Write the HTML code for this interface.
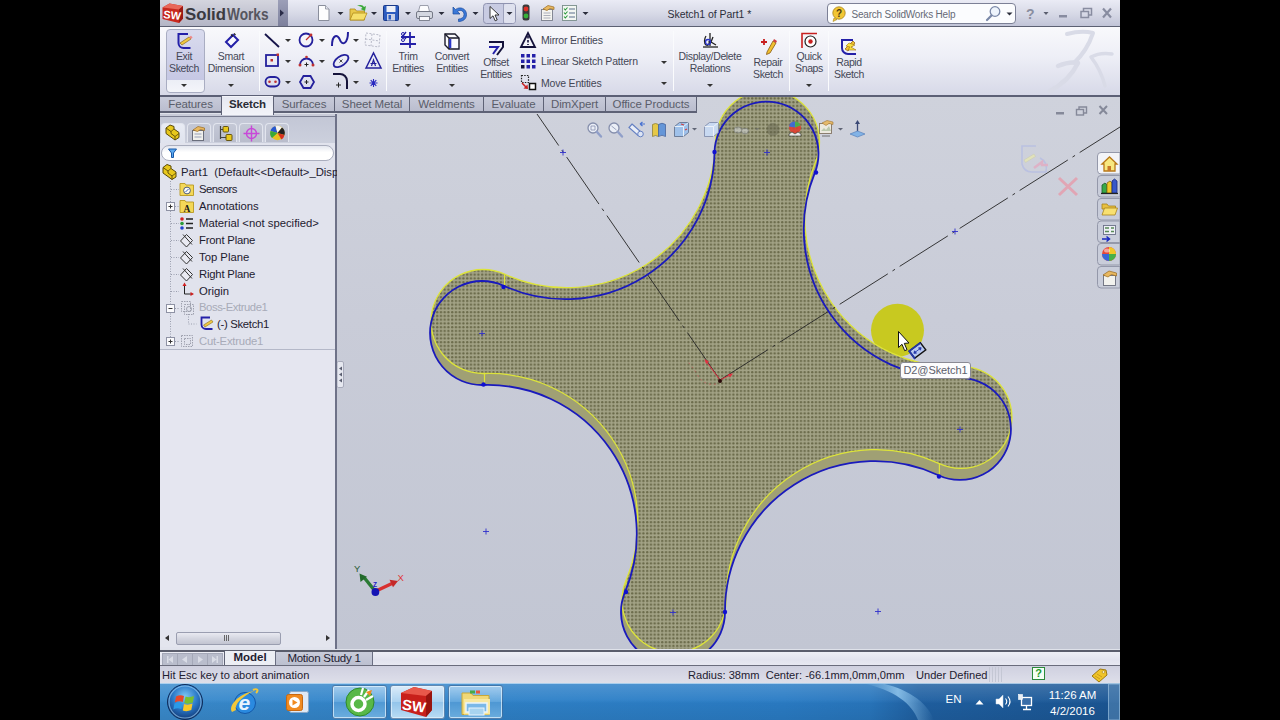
<!DOCTYPE html>
<html lang="en">
<head>
<meta charset="utf-8">
<title>Sketch1 of Part1 * - SolidWorks</title>
<style>
*{box-sizing:border-box;margin:0;padding:0}
html,body{width:1280px;height:720px;overflow:hidden;background:#000}
body{position:relative;font-family:"Liberation Sans","DejaVu Sans",sans-serif;font-size:11px;color:#222}
.abs{position:absolute}
#app{position:absolute;left:160px;top:0;width:960px;height:720px;background:#dfe2ea;overflow:hidden}
/* title bar */
#title{position:absolute;left:0;top:0;width:960px;height:27px;background:linear-gradient(#eaebf5,#d8dae7 50%,#c1c4d7);border-bottom:1px solid #5c6072}
#logo{position:absolute;left:0;top:0;width:118px;height:26px;background:linear-gradient(#d4d5de,#c4c5d2 50%,#b4b6c6)}
#logobtn{position:absolute;left:118px;top:0;width:10px;height:26px;background:linear-gradient(#9c9fb8,#7d809c)}
/* ribbon */
#ribbon{position:absolute;left:0;top:27px;width:960px;height:70px;border-bottom:2px solid #5c6076;background:linear-gradient(#f9f9fc,#edeef6 45%,#d7d9e8)}
#tabs{position:absolute;left:0;top:96px;width:537px;height:19px;z-index:5}
/* tree */
#tree{position:absolute;left:0;top:114px;width:176px;height:535px;background:#eef0f6}
/* viewport */
#view{position:absolute;left:177px;top:97px;width:783px;height:552px;background:linear-gradient(180deg,#cfd2dc 0%,#c9ccd8 40%,#c2c6d3 100%);overflow:hidden}
#bottomtabs{position:absolute;left:0;top:649px;width:960px;height:17px;background:#e8eaf1;border-top:1px solid #6d7183}
#status{position:absolute;left:0;top:666px;width:960px;height:17px;background:#e9ebf1;border-top:1px solid #9fa3b3}
#taskbar{position:absolute;left:0;top:683px;width:960px;height:37px;background:linear-gradient(90deg,#3a8bcd 0%,#2f82c9 35%,#2a7cc5 65%,#2876bd 74%,#1f60a2 79%,#1b5694 100%)}

.t{position:absolute;white-space:nowrap;color:#444756;font-size:10.5px;letter-spacing:-0.2px;line-height:12px}
.tc{position:absolute;white-space:nowrap;color:#444756;font-size:10.5px;letter-spacing:-0.35px;line-height:12px;text-align:center;transform:translateX(-50%)}
.dd{position:absolute;width:0;height:0;border-left:3px solid transparent;border-right:3px solid transparent;border-top:3px solid #333}
.sep{position:absolute;top:4px;width:1px;height:60px;background:#d0d3de;border-right:1px solid #fafbfd}
.ic{position:absolute;overflow:visible}
#exitbtn{position:absolute;left:6px;top:2px;width:39px;height:64px;border:1px solid #a9adc2;border-radius:4px;background:linear-gradient(#d9dbee 0%,#c6c8e4 80%,#eceef6 81%,#f4f5fa 100%)}
.tab{position:absolute;top:0;height:17px;border:1px solid #5e6276;border-bottom-width:2px;border-top-color:#5c6076;background:linear-gradient(#c8cbda,#babdce);color:#5a5d6a;font-size:11.5px;letter-spacing:-0.1px;line-height:14px;text-align:center;font-family:"Liberation Sans",sans-serif}
.tab.act{background:linear-gradient(#e6e8f1,#f3f4f9);border-top-color:transparent;border-bottom:none;height:19px;color:#2a2c36;font-weight:bold}

#tree{background:#e1e3ed;border-right:2px solid #6e7288;width:177px}
#treetop{position:absolute;left:0;top:0;width:175px;height:29px;background:linear-gradient(#c9ccd9 0,#c9ccd9 2px,#7a7e92 2px,#7a7e92 3px,#c3c7d6 3px,#ccd0dd 100%)}
.ttab{position:absolute;top:9px;height:19px;width:24px;border:1px solid #e2e5ee;border-bottom:none;border-radius:4px 4px 0 0;background:linear-gradient(#c4c8d6,#b9bdcc)}
.ttab.act{background:linear-gradient(#e9ecf4,#dfe3ee);height:20px}
#filter{position:absolute;left:1px;top:31px;width:173px;height:16px;border:1px solid #a9adbd;border-radius:8px;background:linear-gradient(#e4e7ef,#ffffff 45%,#ffffff)}
.tr{position:absolute;white-space:nowrap;font-size:11.3px;line-height:14px;color:#1e2030;height:14px}
.tr.gray{color:#a8abb8}
.dot-v{position:absolute;width:0;border-left:1px dotted #9a9eae}
.dot-h{position:absolute;height:0;border-top:1px dotted #9a9eae}
.pm{position:absolute;width:9px;height:9px;border:1px solid #8a8ea2;background:#fafbfd;font-size:9px;line-height:7px;text-align:center;color:#333}

#bottomtabs{top:650px;height:16px;border-top:2px solid #5a5d6c;background:linear-gradient(#edeef6,#e2e3ee 55%,#e8e9f2)}
#status{top:665px;height:18px;border-top:1px solid #6a6c7c;background:linear-gradient(#cfd0df,#d8d9e6 60%,#dedfe9)}
.st{position:absolute;top:3px;font-size:11.1px;line-height:13px;color:#1e2030;white-space:pre}
.btab{position:absolute;top:0;height:14px;font-size:11.5px;line-height:13px;text-align:center;font-family:"Liberation Sans",sans-serif;color:#1e2030}
.tb{position:absolute;top:2px;height:34px;width:55px;border:1px solid rgba(30,70,120,.55);border-radius:3px;background:linear-gradient(rgba(200,228,250,.7),rgba(130,190,235,.6) 50%,rgba(100,168,222,.6) 51%,rgba(140,200,240,.65));box-shadow:inset 0 0 0 1px rgba(230,245,255,.7)}
</style>
</head>
<body>
<div id="app">
  <div id="title"><div id="logo"></div><div id="logobtn"></div>
  <svg class="ic" style="left:0;top:0" width="960" height="27" viewBox="160 0 960 27">
    <!-- SW logo -->
    <path d="M162.500 7.500l7-4 13.500 2.500v12.500l-4 4.500-16.500-4z" fill="#c8281e"/><path d="M162.500 7.500l7-4 13.500 2.500-4 3.500z" fill="#e8685a"/><path d="M179 9.500l4-3.500v12.500l-4 4.500z" fill="#9a1a14"/>
    <text x="163.500" y="19" font-size="11" font-weight="bold" fill="#fff" font-family="Liberation Sans, sans-serif" textLength="17.500" lengthAdjust="spacingAndGlyphs" transform="rotate(7 172 14)">SW</text>
    <text x="185" y="19.500" font-size="16" font-weight="bold" fill="#3a3a40" font-family="Liberation Sans, sans-serif" textLength="41" lengthAdjust="spacingAndGlyphs">Solid</text>
    <text x="227" y="19.500" font-size="16" font-weight="bold" fill="#55555e" font-family="Liberation Sans, sans-serif" textLength="41.500" lengthAdjust="spacingAndGlyphs">Works</text>
    <path d="M280 9.500l4 3.500-4 3.500z" fill="#2a2c48"/>
    <!-- new -->
    <path d="M318.500 5.500h7l3.500 3.500v11.500h-10.500z" fill="#fdfdfe" stroke="#8a8e9c" stroke-width="1"/><path d="M325.500 5.500v3.500h3.500" fill="#e4e6ee" stroke="#8a8e9c" stroke-width=".8"/>
    <!-- open -->
    <path d="M350 9h5l1.500 2h8v9h-14.500z" fill="#e9c84a" stroke="#b08a1a" stroke-width=".8"/><path d="M350 20l3-7h14l-3 7z" fill="#f6df6a" stroke="#b08a1a" stroke-width=".8"/><path d="M357 6c3-2 6-1 7 1l2-1-1 5-4.500-2 2-1c-1-1.500-3-2-5.500-2z" fill="#38a838"/>
    <!-- save -->
    <rect x="383.500" y="5.500" width="15" height="15" rx="1" fill="#2c5cc0" stroke="#1a3a8a" stroke-width="1"/><rect x="386.500" y="6" width="9" height="6" fill="#eef1f8"/><rect x="387" y="14" width="8" height="6.500" fill="#c8d0e6"/><rect x="388.500" y="15" width="2.500" height="4.500" fill="#2c5cc0"/>
    <!-- print -->
    <path d="M420 5.500h8l1.500 6h-11z" fill="#fcfcfe" stroke="#888c9a" stroke-width=".8"/><rect x="416.500" y="11.500" width="16" height="7" rx="1.500" fill="#d4d7e0" stroke="#6a6e7c" stroke-width=".9"/><rect x="419.500" y="16.500" width="10" height="4" fill="#f8f8fb" stroke="#6a6e7c" stroke-width=".8"/>
    <!-- undo -->
    <path d="M453 7v7h7l-2.500-2.500c3-2.500 6.500-.500 6.500 3 0 3-2.500 4.500-5.500 4.500v2.500c4.500 0 8-2.500 8-7 0-6-6.500-8.500-11-5z" fill="#3a78d8" stroke="#1c4a9c" stroke-width=".7"/>
    <!-- select button -->
    <rect x="483.500" y="3.500" width="32" height="20" rx="3" fill="#c8cbe2" stroke="#8f93b0"/><path d="M503.500 4v19" stroke="#9ea2bc"/><rect x="504" y="4" width="11" height="19" rx="2" fill="#dfe1ee"/>
    <path d="M490 6.500v12l3-2.700 2.200 5 2-0.900-2.200-4.900h4z" fill="#fff" stroke="#222" stroke-width=".9"/>
    <!-- traffic light -->
    <rect x="522.500" y="4.500" width="7" height="16" rx="2.500" fill="#3a3a3a"/><circle cx="526" cy="9" r="2.400" fill="#e03028"/><circle cx="526" cy="16" r="2.400" fill="#38b038"/>
    <!-- options -->
    <rect x="541.500" y="9.500" width="11" height="11" fill="#f4f4f0" stroke="#7a7e8c" stroke-width=".9"/><path d="M543.500 13h7M543.500 15.500h7M543.500 18h7" stroke="#9a9eac" stroke-width=".8"/><path d="M543 9l5-3.500 6 1.500 0 2.500-4-1-3 2z" fill="#e8b860" stroke="#9a6a20" stroke-width=".7"/>
    <!-- checklist -->
    <rect x="562.500" y="5.500" width="14" height="15" fill="#f2f6f2" stroke="#7a8e8c" stroke-width=".9"/><path d="M569 9h6M569 13h6M569 17h6" stroke="#5a6e8c" stroke-width="1"/><path d="M564 8.500l1.300 1.500 2.200-2.500M564 12.500l1.300 1.500 2.200-2.500M564 16.500l1.300 1.500 2.200-2.500" stroke="#2a9a3a" stroke-width="1.100" fill="none"/>
    <g fill="#2a2c3a">
      <path d="M337.500 12h6l-3 3z"/><path d="M371 12h6l-3 3z"/><path d="M405 12h6l-3 3z"/><path d="M438.500 12h6l-3 3z"/><path d="M472.500 12h6l-3 3z"/><path d="M506.500 12h6l-3 3z"/><path d="M582.500 12h6l-3 3z"/>
    </g>
    <!-- doc title -->
    <text x="667.500" y="18" font-size="10.500" fill="#2c2e3a" font-family="Liberation Sans, sans-serif" letter-spacing="-0.050">Sketch1 of Part1 *</text>
    <!-- search -->
    <rect x="827.500" y="3.500" width="188" height="20" rx="3.500" fill="#fbfcfe" stroke="#7c8096"/>
    <circle cx="839" cy="13" r="6.200" fill="#f2c634" stroke="#a8841c" stroke-width=".8"/><path d="M834 18l-1 3.500 4-2z" fill="#f2c634" stroke="#a8841c" stroke-width=".6"/><text x="836" y="17" font-size="10" font-weight="bold" fill="#4a3a10" font-family="Liberation Sans, sans-serif">?</text>
    <text x="851.500" y="17.500" font-size="10" fill="#666a76" font-family="Liberation Sans, sans-serif" letter-spacing="-0.200">Search SolidWorks Help</text>
    <circle cx="995" cy="11.500" r="4.800" fill="#eef4fc" stroke="#7a88a8" stroke-width="1.300"/><path d="M991.500 15.500l-4.500 4.500" stroke="#7a88a8" stroke-width="2.200" stroke-linecap="round"/>
    <path d="M1006.500 12.500h6l-3 3z" fill="#2a2c3a"/>
    <!-- help / window buttons -->
    <text x="1026" y="19" font-size="14" font-weight="bold" fill="#8a8ea0" font-family="Liberation Sans, sans-serif">?</text>
    <path d="M1043.500 12h5l-2.500 3z" fill="#5a5e6e"/>
    <rect x="1059" y="15" width="8" height="2.500" fill="#888ca0"/>
    <g fill="none" stroke="#888ca0" stroke-width="1.500"><rect x="1081" y="11.500" width="7.500" height="6"/><path d="M1083.500 11.500v-3h8v6.500h-3"/></g>
    <path d="M1103 8.500l8 9M1111 8.500l-8 9" stroke="#888ca0" stroke-width="2.200"/>
  </svg>
</div>
  <div id="ribbon">
  <div id="exitbtn"></div>
  <svg class="ic" style="left:15px;top:4px" width="20" height="20" viewBox="0 0 20 20"><path d="M13 3H3.500V12a5 5 0 0 0 5 5H15.500" fill="none" stroke="#2420a8" stroke-width="2"/><path d="M5 12 L14 6 L16 8 L7 14 Z" fill="#f0c840" stroke="#8a6a20" stroke-width=".7"/><path d="M14 6l2-1.2 1.6 1.8L16 8z" fill="#e88"/></svg>
  <div class="tc" style="left:24px;top:23px">Exit<br>Sketch</div>
  <div class="dd" style="left:21px;top:57px"></div>
  <svg class="ic" style="left:62px;top:4px" width="20" height="20" viewBox="0 0 20 20"><path d="M4 11 L11 4 L16 9 L9 16 Z" fill="#f8f8ff" stroke="#2420a8" stroke-width="2"/><path d="M9 3.5l2 2M12 2.5l1.5 1.5" stroke="#222" stroke-width="1.2"/></svg>
  <div class="tc" style="left:71px;top:23px">Smart<br>Dimension</div>
  <div class="dd" style="left:68px;top:57px"></div>
  <div class="sep" style="left:99px"></div>
  <!-- small icon grid -->
  <svg class="ic" style="left:103px;top:3px" width="120" height="64" viewBox="263 30 120 64">
    <g fill="none" stroke="#24209c" stroke-width="1.8">
      <path d="M265 34 L279 47" stroke="#16144a"/>
      <rect x="266" y="55" width="12" height="11"/><rect x="270.5" y="59" width="2.5" height="2.5" fill="#c03030" stroke="none"/><rect x="276.5" y="53.5" width="2.5" height="2.5" fill="#c03030" stroke="none"/>
      <rect x="265.5" y="77" width="14" height="9.5" rx="4.7"/><circle cx="269.5" cy="81.8" r="1.3" fill="#c03030" stroke="none"/><circle cx="275.5" cy="81.8" r="1.3" fill="#c03030" stroke="none"/>
      <circle cx="306" cy="40" r="6.5"/><path d="M306 40l4.5-4.5" stroke="#c03030" stroke-width="1.2"/><circle cx="311" cy="35" r="1.4" fill="#c03030" stroke="none"/>
      <path d="M300 65 a6.5 6.5 0 0 1 13 0"/><circle cx="300" cy="65" r="1.5" fill="#c03030" stroke="none"/><circle cx="313" cy="65" r="1.5" fill="#c03030" stroke="none"/><circle cx="306.5" cy="57" r="1.3" fill="#c03030" stroke="none"/><path d="M304.5 64.5h4M306.500 62.500v4" stroke="#222" stroke-width="1"/>
      <path d="M300 82 l3.500-6 h7 l3.500 6 -3.500 6 h-7z"/><path d="M304.5 82h4M306.5 80v4" stroke="#222" stroke-width="1"/>
      <path d="M332 46 c0-12 6-12 8-6 s8 4 8-8" stroke-width="2"/>
      <ellipse cx="341" cy="61" rx="8.500" ry="4.500" transform="rotate(-35 341 61)"/><path d="M339.500 59.500l3 3m0-3l-3 3" stroke="#222" stroke-width=".8"/>
      <path d="M333 74 h7 a7 7 0 0 1 7 7 v8" stroke="#14123a" stroke-width="2"/><path d="M336 85h5M338.500 82.500v5" stroke="#222" stroke-width="1"/>
      <path d="M366 33 l14 2 -1 12 -14-2z M372 34l-1 12 M365.500 39l14 2" stroke="#b8bac8" stroke-width="1" stroke-dasharray="2 1.500"/>
      <path d="M366 68 l7.500-15 7.500 15z" stroke-width="1.500"/><path d="M370.500 63.500h6M371.500 66l2-6 2 6" stroke-width="1.200"/>
      <path d="M369.500 83h8M373.500 79v8M370.700 80.200l5.600 5.600M376.300 80.200l-5.600 5.600" stroke-width="1.100" stroke="#2828c0"/>
    </g>
  </svg>
  <div class="dd" style="left:125px;top:12px"></div><div class="dd" style="left:125px;top:33px"></div><div class="dd" style="left:125px;top:54px"></div>
  <div class="dd" style="left:159px;top:12px"></div><div class="dd" style="left:159px;top:33px"></div>
  <div class="dd" style="left:193px;top:12px"></div><div class="dd" style="left:193px;top:33px"></div><div class="dd" style="left:193px;top:54px"></div>
  <div class="sep" style="left:226px"></div>
  <!-- trim -->
  <svg class="ic" style="left:238px;top:3px" width="20" height="20" viewBox="0 0 20 20"><g fill="none" stroke="#2420a8" stroke-width="1.8"><path d="M3 7h14M2 14h16M12 2v16"/><path d="M8 2l-3 4 3 3" stroke-width="1.300"/><circle cx="5" cy="4" r="1.500" stroke-width="1"/><circle cx="5" cy="10" r="1.500" stroke-width="1"/></g></svg>
  <div class="tc" style="left:248px;top:23px">Trim<br>Entities</div>
  <div class="dd" style="left:245px;top:57px"></div>
  <svg class="ic" style="left:282px;top:4px" width="20" height="20" viewBox="0 0 20 20"><g fill="#fbfbfe" stroke="#1a1a2a" stroke-width="1.400"><path d="M3 3h10l4 4v11H7l-4-4z"/><path d="M7 7h10M7 7v11M7 7L3 3" fill="none"/></g><path d="M8.200 8v9" stroke="#2a35c8" stroke-width="2.200"/></svg>
  <div class="tc" style="left:292px;top:23px">Convert<br>Entities</div>
  <div class="dd" style="left:289px;top:57px"></div>
  <svg class="ic" style="left:326px;top:11px" width="20" height="20" viewBox="0 0 20 20"><g fill="none"><path d="M3 4h14v5l-6 8" stroke="#14123a" stroke-width="2"/><path d="M3 9h9l-5 7" stroke="#2420a8" stroke-width="2"/></g></svg>
  <div class="tc" style="left:336px;top:29px">Offset<br>Entities</div>
  <!-- mirror / pattern / move -->
  <svg class="ic" style="left:358px;top:3px" width="20" height="64" viewBox="517 30 20 64">
    <path d="M520 47 l7-14 7 14z" fill="#f4f4fa" stroke="#14123a" stroke-width="1.800"/><path d="M527 36v9" stroke="#14123a" stroke-width="1.600" stroke-dasharray="2.500 1.500"/>
    <g fill="#2420a8"><rect x="520" y="54" width="3.500" height="3.500"/><rect x="525.500" y="54" width="3.500" height="3.500"/><rect x="531" y="54" width="3.500" height="3.500"/><rect x="520" y="59.500" width="3.500" height="3.500"/><rect x="525.500" y="59.500" width="3.500" height="3.500"/><rect x="531" y="59.500" width="3.500" height="3.500"/><rect x="520" y="65" width="3.500" height="3.500" fill="#14123a"/><rect x="525.500" y="65" width="3.500" height="3.500"/><rect x="531" y="65" width="3.500" height="3.500"/></g>
    <rect x="520.500" y="75.500" width="7" height="7" fill="none" stroke="#222" stroke-width="1.200" stroke-dasharray="1.500 1.200"/><rect x="528.500" y="83.500" width="6" height="6" fill="#fff" stroke="#111" stroke-width="1.500"/><path d="M521 83l5 5" stroke="#c82020" stroke-width="1.500"/><path d="M527 89l-4.500-.5 4-4z" fill="#c82020"/>
  </svg>
  <div class="t" style="left:381px;top:7px">Mirror Entities</div>
  <div class="t" style="left:381px;top:28px">Linear Sketch Pattern</div>
  <div class="t" style="left:381px;top:50px">Move Entities</div>
  <div class="dd" style="left:501px;top:34px"></div><div class="dd" style="left:501px;top:55px"></div>
  <div class="sep" style="left:513px"></div>
  <svg class="ic" style="left:540px;top:4px" width="20" height="20" viewBox="0 0 20 20"><g fill="none" stroke="#222" stroke-width="1.300"><path d="M3 16h15"/><path d="M10 2v13M6 5c-2 3-2 7 0 9 2 1 4-1 3-4M13 6l-2 5 5 3" /><circle cx="8" cy="11" r="2.500" stroke="#2a35c8"/></g></svg>
  <div class="tc" style="left:550px;top:23px">Display/Delete<br>Relations</div>
  <div class="dd" style="left:547px;top:57px"></div>
  <svg class="ic" style="left:599px;top:9px" width="20" height="20" viewBox="0 0 20 20"><path d="M2 6h6M5 3v6" stroke="#c82020" stroke-width="1.800"/><path d="M8 16 L14 5 L17 7 L11 17 L7.500 18.500z" fill="#f0c030" stroke="#8a5a10" stroke-width=".8"/><path d="M14 5l1-2 3 2-1 2z" fill="#d04040"/></svg>
  <div class="tc" style="left:608px;top:29px">Repair<br>Sketch</div>
  <div class="sep" style="left:629px"></div>
  <svg class="ic" style="left:639px;top:4px" width="20" height="20" viewBox="0 0 20 20"><path d="M3 17V2.500h15" fill="none" stroke="#c82020" stroke-width="1.600"/><circle cx="11.500" cy="10.500" r="5.500" fill="#fff" stroke="#222" stroke-width="1.200"/><circle cx="11.500" cy="10.500" r="2.200" fill="#c82020"/></svg>
  <div class="tc" style="left:649px;top:23px">Quick<br>Snaps</div>
  <div class="dd" style="left:646px;top:57px"></div>
  <div class="sep" style="left:668px"></div>
  <svg class="ic" style="left:679px;top:10px" width="20" height="20" viewBox="0 0 20 20"><path d="M14 3H3v8a6 6 0 0 0 6 6h8" fill="none" stroke="#2420a8" stroke-width="2"/><path d="M6 12 L14 4 L16 6 L9 14z" fill="#f0c030" stroke="#8a5a10" stroke-width=".7"/><path d="M10 6l6 2-4 2 5 3-8 0 2-3-4-1z" fill="#f8e040" stroke="#a07010" stroke-width=".6"/></svg>
  <div class="tc" style="left:689px;top:29px">Rapid<br>Sketch</div>
  <!-- DS watermark -->
  <svg class="ic" style="left:880px;top:0" width="80" height="68" viewBox="1040 27 80 68"><g fill="none" stroke="#d9dbe7" stroke-width="4" stroke-linecap="round" stroke-linejoin="round"><path d="M1067 34 Q1082 30 1093 33 Q1087 51 1074 63"/><path d="M1058 66 Q1070 61 1078 63 Q1069 81 1050 91" stroke-width="4.500"/><path d="M1112 54 Q1100 52 1091 57 Q1101 70 1105 86" stroke-width="3.500"/></g></svg>
</div>
  <div id="tabs">
  <div class="tab" style="left:-1px;width:63px">Features</div>
  <div class="tab act" style="left:61px;width:53px">Sketch</div>
  <div class="tab" style="left:113px;width:62px">Surfaces</div>
  <div class="tab" style="left:174px;width:76px">Sheet Metal</div>
  <div class="tab" style="left:249px;width:75px">Weldments</div>
  <div class="tab" style="left:323px;width:61px">Evaluate</div>
  <div class="tab" style="left:383px;width:63px">DimXpert</div>
  <div class="tab" style="left:445px;width:92px">Office Products</div>
</div>
  <div id="tree">
  <div id="treetop">
    <div class="ttab act" style="left:1px"></div><div class="ttab" style="left:27px"></div><div class="ttab" style="left:53px"></div><div class="ttab" style="left:79px"></div><div class="ttab" style="left:105px"></div>
  </div>
  <div id="filter"></div>
  <svg class="ic" style="left:0;top:0" width="176" height="240" viewBox="160 114 176 240">
    <!-- tab icons -->
    <g id="particon"><path d="M166 128l4-3 4 1.500 0 2.500 5 3.500 0 5-4 2.500-9-6.500z" fill="#e8c81c" stroke="#5a4a08" stroke-width="1"/><path d="M166 128l5 3.500 0 2 4 3 0 3.500" fill="none" stroke="#5a4a08" stroke-width=".9"/><path d="M171 131.500l3-2.500M175 136.500l4-3" stroke="#5a4a08" stroke-width=".8"/></g>
    <rect x="192.500" y="130.500" width="11" height="10" fill="#f0f0ec" stroke="#6a6e7c"/><path d="M194.500 134h7M194.500 137h7" stroke="#98a0b8" stroke-width="1.200"/><path d="M193 130l5-3.500 6.500 1.500 0 2.500-4-1-3 2z" fill="#e8b860" stroke="#9a6a20" stroke-width=".7"/>
    <path d="M220.500 126v13M220.500 129.500h4M220.500 137.500h6" stroke="#444" stroke-width="1.200" fill="none"/><rect x="223" y="126.500" width="5.500" height="5.500" rx="1" fill="#e8c81c" stroke="#5a4a08" stroke-width=".9"/><rect x="226" y="134.500" width="6" height="6" rx="1" fill="#e8c81c" stroke="#5a4a08" stroke-width=".9"/>
    <g stroke="#c848d8" stroke-width="1.400" fill="none"><circle cx="251.500" cy="133.500" r="5"/><path d="M251.500 125.500v16M243.500 133.500h16"/></g>
    <circle cx="277.500" cy="133" r="7.200" fill="#e8c020"/><path d="M277.500 133L270.500 131a7.200 7.200 0 0 1 5-5z" fill="#2858d0"/><path d="M277.500 133l-2-7a7.200 7.200 0 0 1 6.500 1.500z" fill="#f4f4f4"/><path d="M277.500 133l4.500-5.500a7.200 7.200 0 0 1 2.500 7.500z" fill="#222"/><path d="M277.500 133l7 2a7.200 7.200 0 0 1-3 4.500z" fill="#d83020"/><path d="M277.500 133l-7-2a7.200 7.200 0 0 0 1.500 7z" fill="#38a838"/>
    <!-- filter funnel -->
    <path d="M168.500 149h8l-3 4v4.500h-2v-4.500z" fill="#58a8f0" stroke="#1858a8" stroke-width="1"/>
    <!-- Part1 icon -->
    <use href="#particon" transform="translate(-3,39.500)"/>
    <!-- dotted lines -->
    <g stroke="#9a9eae" stroke-width="1" stroke-dasharray="1 1.500" fill="none">
      <path d="M170.500 181v161"/>
      <path d="M171 189.500h8M171 223.500h8M171 240.500h8M171 257.500h8M171 274.500h8M171 291.500h8M175 206.500h4M175 308.500h4M175 341.500h4"/>
      <path d="M188.500 314v10h8"/>
    </g>
    <!-- sensors folder -->
    <path d="M180 183.500h5l1 1.500h7.500v10.500H180z" fill="#f4d858" stroke="#b89820" stroke-width=".9"/><circle cx="187" cy="190.500" r="3.400" fill="#fdfdf4" stroke="#3a4a6a" stroke-width=".9"/><path d="M185.500 192l3-3" stroke="#2a5ac8" stroke-width="1"/>
    <!-- annotations -->
    <path d="M180 200.500h5l1 1.500h7.500v10.500H180z" fill="#f4d858" stroke="#b89820" stroke-width=".9"/><text x="183.500" y="211.500" font-size="9.500" font-weight="bold" font-family="Liberation Serif, serif" fill="#1a1a1a">A</text>
    <!-- material -->
    <circle cx="182" cy="219" r="1.800" fill="#d02020"/><circle cx="182" cy="223.500" r="1.800" fill="#2a9a3a"/><circle cx="182" cy="228" r="1.800" fill="#2040d0"/><path d="M186 219h7M186 223.500h7M186 228h7" stroke="#222" stroke-width="1.500"/>
    <!-- planes -->
    <g fill="#e9eaf2" stroke="#333" stroke-width="1">
      <path d="M180.500 241l6-6.500 6 6-6 6.500z"/><path d="M180.500 258l6-6.500 6 6-6 6.500z"/><path d="M180.500 275l6-6.500 6 6-6 6.500z"/>
    </g>
    <g stroke="#333" stroke-width="1"><path d="M183 234.500l9 10M183 251.500l9 10M183 268.500l9 10"/></g>
    <!-- tree origin icon -->
    <path d="M184.500 284v10h8" fill="none" stroke="#222" stroke-width="1"/><path d="M184.500 282.500l-2 3.500h4z" fill="#d02020"/><path d="M194 294l-3.500-2v4z" fill="#d02020"/>
    <!-- boss extrude (grayed) -->
    <g fill="none" stroke="#9ea1ae" stroke-width="1" stroke-dasharray="1.500 1"><rect x="181.500" y="301.500" width="9" height="10"/><rect x="184.500" y="304.500" width="9" height="10"/></g><circle cx="189" cy="309" r="2.500" fill="none" stroke="#a0a3b0"/>
    <g fill="none" stroke="#9ea1ae" stroke-width="1" stroke-dasharray="1.500 1"><rect x="181.500" y="335.500" width="11" height="11"/><rect x="184.500" y="338.500" width="6" height="6"/></g>
    <!-- sketch icon -->
    <path d="M210 317.500h-8.500v7a4.500 4.500 0 0 0 4.500 4.500h6.500" fill="none" stroke="#2420a8" stroke-width="1.800"/><path d="M203.500 325l8-5 1.500 2-8 5z" fill="#f0c840" stroke="#8a6a20" stroke-width=".6"/>
    <!-- plus/minus boxes -->
    <g fill="#fbfbfd" stroke="#8e92a4" stroke-width="1"><rect x="166.500" y="202.500" width="8" height="8"/><rect x="166.500" y="304.500" width="8" height="8"/><rect x="166.500" y="337.500" width="8" height="8"/></g>
    <path d="M168.500 206.500h4M170.500 204.500v4M168.500 308.500h4M168.500 341.500h4M170.500 339.500v4" stroke="#333" stroke-width="1"/>
  </svg>
<div class="tr " style="left:21px;top:51px">Part1&nbsp; (Default&lt;&lt;Default&gt;_Disp</div><div class="tr " style="left:39px;top:68px;letter-spacing:-0.5px">Sensors</div><div class="tr " style="left:39px;top:85px">Annotations</div><div class="tr " style="left:39px;top:102px">Material &lt;not specified&gt;</div><div class="tr " style="left:39px;top:119px;letter-spacing:-0.2px">Front Plane</div><div class="tr " style="left:39px;top:136px">Top Plane</div><div class="tr " style="left:39px;top:153px;letter-spacing:-0.2px">Right Plane</div><div class="tr " style="left:39px;top:170px">Origin</div><div class="tr gray" style="left:39px;top:186px;letter-spacing:-0.44px">Boss-Extrude1</div><div class="tr " style="left:57px;top:203px;letter-spacing:-0.3px">(-) Sketch1</div><div class="tr gray" style="left:39px;top:220px;letter-spacing:-0.2px">Cut-Extrude1</div>
  <div class="abs" style="left:0;top:235px;width:175px;height:1px;background:#b4b8c8"></div>
  <div class="abs" style="left:0;top:236px;width:175px;height:280px;background:#e5e6f0"></div>
  <!-- h scrollbar -->
  <div class="abs" style="left:0;top:516px;width:175px;height:17px;background:#e3e5ee"></div>
  <div class="abs" style="left:16px;top:518px;width:105px;height:13px;border:1px solid #9a9eb0;border-radius:2px;background:linear-gradient(#e9eaf1,#d4d6e0 50%,#c2c4d1)"></div>
  <div class="abs" style="left:64px;top:521px;width:1px;height:6px;background:#666;box-shadow:2px 0 0 #666,4px 0 0 #666"></div>
  <div class="abs" style="left:5px;top:521px;width:0;height:0;border-top:3px solid transparent;border-bottom:3px solid transparent;border-right:4px solid #333"></div>
  <div class="abs" style="left:166px;top:521px;width:0;height:0;border-top:3px solid transparent;border-bottom:3px solid transparent;border-left:4px solid #333"></div>
</div>
  <div id="view">
<svg id="vsvg" class="abs" style="left:0;top:0" width="783" height="552" viewBox="337 97 783 552">
  <defs>
    <pattern id="dots" x="0" y="0" width="3.75" height="3.75" patternUnits="userSpaceOnUse">
      <rect width="3.75" height="3.75" fill="#a3a386"/>
      <circle cx="1.2" cy="1.2" r="1.150" fill="#686848"/>
    </pattern>
    <clipPath id="cpb"><path d="M714.5 152.6 A149.0 149.0 0 0 1 503.6 285.7 A52.0 52.0 0 1 0 483.5 385.0 A149.0 149.0 0 0 1 625.1 591.8 A52.0 52.0 0 1 0 725.0 611.8 A150.0 150.0 0 0 1 938.4 475.2 A51.0 51.0 0 1 0 958.1 378.0 A149.0 149.0 0 0 1 814.7 173.1 A52.0 52.0 0 1 0 714.5 152.6Z"/></clipPath>
  </defs>
  <circle cx="897.500" cy="330.300" r="26.500" fill="#c8c920"/>
  <!-- body fill (union of old body and sketch) -->
  <path d="M714.5 152.6 A149.0 149.0 0 0 1 503.6 285.7 A52.0 52.0 0 1 0 483.5 385.0 A149.0 149.0 0 0 1 625.1 591.8 A52.0 52.0 0 1 0 725.0 611.8 A150.0 150.0 0 0 1 938.4 475.2 A51.0 51.0 0 1 0 958.1 378.0 A149.0 149.0 0 0 1 814.7 173.1 A52.0 52.0 0 1 0 714.5 152.6Z" fill="#a0a074"/>
  <path d="M714.5 152.6 A149.0 149.0 0 0 1 503.6 285.7 A52.0 52.0 0 1 0 483.5 385.0 A149.0 149.0 0 0 1 625.1 591.8 A52.0 52.0 0 1 0 725.0 611.8 A150.0 150.0 0 0 1 938.4 475.2 A51.0 51.0 0 1 0 958.1 378.0 A149.0 149.0 0 0 1 814.7 173.1 A52.0 52.0 0 1 0 714.5 152.6Z" fill="url(#dots)" transform="translate(1,-11.500)"/>
  <!-- old body edges (yellow) -->
  <path d="M714.5 152.6 A149.0 149.0 0 0 1 503.6 285.7 A52.0 52.0 0 1 0 483.5 385.0 A149.0 149.0 0 0 1 625.1 591.8 A52.0 52.0 0 1 0 725.0 611.8 A150.0 150.0 0 0 1 938.4 475.2 A51.0 51.0 0 1 0 958.1 378.0 A149.0 149.0 0 0 1 814.7 173.1 A52.0 52.0 0 1 0 714.5 152.6Z" fill="none" stroke="#dde43a" stroke-width="1.300" transform="translate(1,-11.500)"/>
  <g stroke="#dde43a" stroke-width="1.200"><path d="M504.600 274.500v11M484.500 373.500v11M939.400 464v11M626 580.500v11"/></g>
  <!-- construction lines -->
  <g stroke="#242424" stroke-width=".900" fill="none" stroke-dasharray="57 5.500 3 5.500">
    <path d="M537 114 L720 380" stroke-dashoffset="18.700"/>
    <path d="M1120 127 L720 380" stroke-dashoffset="9.300"/>
  </g>
  <!-- sketch (blue) -->
  <path d="M714.5 152.6 A149.0 149.0 0 0 1 503.6 285.7 A52.0 52.0 0 1 0 483.5 385.0 A149.0 149.0 0 0 1 625.1 591.8 A52.0 52.0 0 1 0 725.0 611.8 A150.0 150.0 0 0 1 938.4 475.2 A51.0 51.0 0 1 0 958.1 378.0 A149.0 149.0 0 0 1 814.7 173.1 A52.0 52.0 0 1 0 714.5 152.6Z" fill="none" stroke="#1a1abc" stroke-width="1.800"/>
  <g fill="#1010d0">
    <circle cx="714.500" cy="152" r="2.200"/><circle cx="503.500" cy="287" r="2.200"/><circle cx="483.500" cy="384.500" r="2.200"/>
    <circle cx="626" cy="592" r="2.200"/><circle cx="725" cy="612" r="2.200"/><circle cx="939" cy="476.500" r="2.200"/>
    <circle cx="816" cy="172.500" r="2.200"/>
  </g>
  <!-- centre marks -->
  <g stroke="#3030cc" stroke-width=".900" fill="none">
    <path d="M560.0 152.5h6M563.0 149.5v6"/>
    <path d="M952.0 231.5h6M955.0 228.5v6"/>
    <path d="M483.0 531.5h6M486.0 528.5v6"/>
    <path d="M875.0 611.5h6M878.0 608.5v6"/>
    <path d="M764.0 152.5h6M767.0 149.5v6"/>
    <path d="M479.0 333.5h6M482.0 330.5v6"/>
    <path d="M670.0 612.5h6M673.0 609.5v6"/>
    <path d="M957.0 429.5h6M960.0 426.5v6"/>
  </g>
  <!-- sketch origin -->
  <g stroke="#e03040" stroke-width="1" fill="#e03040">
    <path d="M720 380 L706 361" fill="none"/><path d="M704.500 359 l4.500 2.500 -3 2.500z" stroke="none"/>
    <path d="M720 380 L730 375" fill="none"/><path d="M733 373.500 l-5 .500 2 3.500z" stroke="none"/>
    <path d="M716 384 Q703 386 697 374 Q692 366 688 362" fill="none" stroke-width=".7" stroke-dasharray="2 3" opacity=".6"/>
  </g>
  <circle cx="720" cy="381" r="2" fill="#2a0a0a"/>
  <!-- cursor highlight -->
  <path d="M898.500 331.500V347.500L902 344.300L904.700 350.700L907 349.700L904.300 343.400L909 343Z" fill="#fff" stroke="#111" stroke-width="1"/>
  <g transform="rotate(-37 917.500 350.500)"><rect x="910.500" y="346" width="14" height="9" fill="#b8c8f0" stroke="#111" stroke-width="1.400"/><path d="M910.500 355.700v-9.700h14" fill="none" stroke="#2438a8" stroke-width="1.800"/><path d="M913 350.500h9M913 350.500l2-1.500v3zM922 350.500l-2-1.500v3z" stroke="#2438a8" stroke-width=".8" fill="#2438a8"/></g>

  <!-- view toolbar -->
  <g opacity=".9">
    <g fill="#eef2fa" stroke="#7e88a8" stroke-width="1.300"><circle cx="593" cy="128" r="5"/><circle cx="614" cy="128" r="5"/></g>
    <path d="M597 132l4 4.500M618 132l4 4.500" stroke="#8a9ac8" stroke-width="2.400" stroke-linecap="round"/>
    <path d="M591 126h4v4h-4z" fill="none" stroke="#7e88a8" stroke-width=".8"/><path d="M611.500 126l5 4" stroke="#7e88a8" stroke-width=".8"/>
    <path d="M632 124l9 8-3 3.500-9-8z" fill="#eef2fa" stroke="#5a78c0" stroke-width="1.200"/><circle cx="640.500" cy="134" r="2.800" fill="#dfe8f8" stroke="#5a78c0"/><path d="M640 124h5M640 124l2.500-2M640 124l2.500 2" stroke="#3a68d0" stroke-width="1.200" fill="none"/>
    <path d="M652.500 124.500q3-2 6 0v12q-3-2-6 0z" fill="#e8c838" stroke="#8a7a28" stroke-width=".8"/><path d="M658.500 124.500q3.500-2.500 7 0v12q-3.500-2.500-7 0z" fill="#5a90d8" stroke="#3a5a98" stroke-width=".8"/>
    <path d="M674.500 126.500l5-4h9v10l-5 4h-9z" fill="#9ac0ec" stroke="#5a6a88" stroke-width=".9"/><path d="M674.500 126.500h9v10M683.500 126.500l5-4" fill="none" stroke="#f4f8fc" stroke-width=".9"/><path d="M681 124l3 1M685 130l2-1" stroke="#d03030" stroke-width="1.200"/>
    <path d="M704.500 126.500l5-4h9v10l-5 4h-9z" fill="#c8daf4" stroke="#7a88a8" stroke-width=".9"/><path d="M704.500 126.500h9v10M713.500 126.500l5-4" fill="none" stroke="#f4f8fc" stroke-width=".9"/>
    <g opacity=".5"><ellipse cx="738" cy="130" rx="4" ry="3" fill="#dfe4ee" stroke="#7a7e8e"/><ellipse cx="745" cy="131" rx="3.500" ry="2.800" fill="#dfe4ee" stroke="#7a7e8e"/></g>
    <circle cx="773" cy="129.500" r="6.500" fill="#5a5a48" opacity=".45"/>
    <circle cx="795" cy="127.500" r="6" fill="#e04030"/><path d="M795 127.500l-6-1a6 6 0 0 1 6-5z" fill="#3a68d8"/><path d="M795 127.500v-6a6 6 0 0 1 5.500 4z" fill="#48b048"/><path d="M789 134l3-2 3 2 3-2 3 2v2h-12z" fill="#f4f4f4" stroke="#222" stroke-width=".6"/>
    <rect x="819.500" y="123.500" width="12" height="10" fill="#f0ece0" stroke="#7a6a58" stroke-width=".9"/><path d="M821 131l3-3 2 2 3-4 2 5z" fill="#b8c8a8"/><path d="M822 123l5-2.500 6 1.500v2.500l-4-1-3 2z" fill="#e8b860" stroke="#9a6a20" stroke-width=".6"/><path d="M822 136h8" stroke="#666" stroke-width="1"/>
    <path d="M857.500 122v12" stroke="#2a3a6a" stroke-width="1.300"/><path d="M857.500 120l-2.500 4h5z" fill="#2a3a6a"/><path d="M850 134l7.500-3 7.500 3-7.500 3z" fill="#7ab0e8" stroke="#4a78b8" stroke-width=".7"/>
    <g fill="#555a6a"><path d="M692 128h5l-2.500 2.500z"/><path d="M724.500 128h5l-2.500 2.500z" opacity=".5"/><path d="M754.500 128h5l-2.500 2.500z" opacity=".4"/><path d="M806 128h5l-2.500 2.500z" opacity=".5"/><path d="M838 128h5l-2.500 2.500z"/></g>
  </g>
  <!-- doc window controls -->
  <rect x="1056" y="112" width="8" height="2.500" fill="#858999"/>
  <g fill="none" stroke="#858999" stroke-width="1.400"><rect x="1076.500" y="109.500" width="7" height="5.500"/><path d="M1079 109.500v-2.500h7.500v6h-3"/></g>
  <path d="M1099.500 106l7.500 8M1107 106l-7.500 8" stroke="#858999" stroke-width="2"/>
  <!-- confirm corner (faded) -->
  <g opacity=".75">
    <path d="M1036 146h-14v18q2 8 10 8h14q2-10-6-14" fill="none" stroke="#b4bce4" stroke-width="1.600"/>
    <path d="M1024 160l10-6 1.500 2.500-10 6z" fill="#e8e8b0" stroke="#c8c8a0" stroke-width=".5"/>
    <path d="M1034 168l8-6v3h6" fill="none" stroke="#e4a8c0" stroke-width="2.500"/>
    <path d="M1059 178l18 17M1077 178l-18 17" stroke="#e898a8" stroke-width="3"/>
  </g>
  <!-- task pane tabs -->
  <g>
    <g stroke="#9498aa" stroke-width="1">
      <path d="M1120 152.500h-19q-3.500 0-3.500 3.500v14.500q0 3.500 3.500 3.500h19z" fill="#f3f4f8"/>
      <path d="M1120 175.500h-19q-3.500 0-3.500 3.500v14.500q0 3.500 3.500 3.500h19z" fill="#c9cdda"/>
      <path d="M1120 198.500h-19q-3.500 0-3.500 3.500v14.500q0 3.500 3.500 3.500h19z" fill="#c9cdda"/>
      <path d="M1120 221h-19q-3.500 0-3.500 3.500v14.500q0 3.500 3.500 3.500h19z" fill="#c9cdda"/>
      <path d="M1120 243.500h-19q-3.500 0-3.500 3.500v14.500q0 3.500 3.500 3.500h19z" fill="#c9cdda"/>
      <path d="M1120 266.500h-19q-3.500 0-3.500 3.500v14.500q0 3.500 3.500 3.500h19z" fill="#c9cdda"/>
    </g>
    <path d="M1102 164l7.500-7 7.500 7h-2v7h-11v-7z" fill="#f8e880" stroke="#b87818" stroke-width="1.300"/><rect x="1107.500" y="166" width="3.500" height="5" fill="#c87828"/>
    <path d="M1102 193v-8l3-2 2 2v8z" fill="#38a848" stroke="#1a5a28" stroke-width=".8"/><path d="M1107 193v-10l3-2 2 2v10z" fill="#f0c828" stroke="#8a6a10" stroke-width=".8"/><path d="M1112 193v-12l2.500-2 2.500 2v12z" fill="#3858c8" stroke="#1a2a78" stroke-width=".8"/><path d="M1101 193.500h17" stroke="#222" stroke-width="1.200"/>
    <path d="M1102 204h5l1.500 2h7v3h-13.500z" fill="#e8c040" stroke="#a8841c" stroke-width=".8"/><path d="M1102 215l2.500-7h13l-2.500 7z" fill="#f8e070" stroke="#a8841c" stroke-width=".8"/>
    <rect x="1103.500" y="225.500" width="12" height="9" fill="#eef0f6" stroke="#6a7088" stroke-width=".9"/><path d="M1105 228h4M1111 228h3M1105 231.500h4M1111 231.500h3" stroke="#5a8a58" stroke-width="1.600"/><path d="M1102 239h7M1106.500 236.500l3 2.500-3 2.500" fill="none" stroke="#1828c0" stroke-width="1.500"/>
    <circle cx="1109" cy="254" r="7" fill="#e84838"/><path d="M1109 254v-7a7 7 0 0 1 7 7z" fill="#f0c828"/><path d="M1109 254h7a7 7 0 0 1-7 7z" fill="#48b048"/><path d="M1109 254v7a7 7 0 0 1-7-7z" fill="#3868d8"/><ellipse cx="1107" cy="250.500" rx="3" ry="2" fill="#fff" opacity=".5"/>
    <rect x="1103.500" y="275.500" width="12" height="10" fill="#f2f2ee" stroke="#6a6e7c" stroke-width=".9"/><path d="M1103 275l6-4 7.500 2v3l-5-1.500-3.500 2.500z" fill="#e8b860" stroke="#9a6a20" stroke-width=".7"/>
  </g>
  <!-- panel collapse handle -->
  <rect x="337" y="361.500" width="6.500" height="26" rx="1.500" fill="#e6e8f0" stroke="#9a9eb0" stroke-width=".8"/>
  <g fill="#5a5e70"><path d="M342 366.500l-3 2 3 2z"/><path d="M342 372.500l-3 2 3 2z"/><path d="M342 378.500l-3 2 3 2z"/></g>
  <!-- triad -->
  <g fill="none" stroke-linecap="butt">
    <path d="M376 591 L392 583.500" stroke="#d83030" stroke-width="3.400"/>
    <path d="M375 591 L364.500 578" stroke="#2a7a34" stroke-width="3.400"/>
  </g>
  <path d="M398 581 l-8.500 -1.200 3.500 7.400z" fill="#c42828"/>
  <path d="M359.500 573.500 l1 8.500 6.500 -5.300z" fill="#236a2c"/>
  <circle cx="375.400" cy="592" r="3.900" fill="#1414b4"/>
  <text x="354" y="572" font-size="9.500" fill="#2a5a34" font-family="Liberation Sans, sans-serif">Y</text>
  <text x="397.500" y="581" font-size="9.500" fill="#e03838" font-family="Liberation Sans, sans-serif">X</text>
  <text x="373" y="587" font-size="6.500" font-weight="bold" fill="#2020c8" font-family="Liberation Sans, sans-serif">Z</text>
</svg>
<div class="abs" id="tip" style="left:563px;top:265px;width:71px;height:17px;border:1px solid #8a8a94;border-radius:3px;background:#fcfcfd;font-size:11px;letter-spacing:-0.1px;line-height:15px;text-align:center;color:#5c606c">D2@Sketch1</div>
</div>
  <div id="bottomtabs">
    <div class="abs" style="left:2px;top:1px;width:61px;height:13px;background:#b9bdcc;border:1px solid #a4a8b8"></div>
    <svg class="ic" style="left:2px;top:1px" width="61" height="13" viewBox="0 0 61 13"><g fill="#d9dce6" stroke="none"><path d="M5 3v7h1.500v-7zM11 3v7l-4.500-3.500z"/><path d="M25 3v7l-5-3.500z"/><path d="M36 3v7l5-3.500z"/><path d="M56 3v7h-1.500v-7zM50 3v7l4.500-3.500z"/></g><path d="M15.500 0v13M30.500 0v13M45.500 0v13" stroke="#a4a8b8"/></svg>
    <div class="btab" style="left:64px;width:52px;font-weight:bold;background:#eceef4;border-left:1px solid #5e6274;border-bottom:1px solid #5e6274;border-right:1px solid #5e6274;margin-top:-1px;height:15px">Model</div>
    <div class="btab" style="left:115px;width:98px;background:linear-gradient(#c9ccda,#bcc0d0);border:1px solid #6a6e82;border-top:none;height:14px;letter-spacing:-0.25px">Motion Study 1</div>
    <div class="abs" style="left:213px;top:13px;width:747px;height:1px;background:#9a9eae"></div>
  </div>
  <div id="status">
    <div class="st" style="left:2px">Hit Esc key to abort animation</div>
    <div class="st" style="left:528px">Radius: 38mm  Center: -66.1mm,0mm,0mm</div>
    <div class="st" style="left:756px">Under Defined</div>
    <div class="abs" style="left:829px;top:1px;width:1px;height:15px;background:#c4c7d4;box-shadow:3px 0 0 #c4c7d4,6px 0 0 #c4c7d4,9px 0 0 #c4c7d4,12px 0 0 #c4c7d4"></div>
    <div class="abs" style="left:872px;top:1px;width:13px;height:13px;border:1px solid #2a8a3a;background:#f4fff4;color:#1a9a2a;font-weight:bold;font-size:11px;line-height:11px;text-align:center">?</div>
    <svg class="ic" style="left:929px;top:0" width="20" height="17" viewBox="0 0 20 17"><path d="M3 10l8-7 6 1 1 5-8 7z" fill="#f0c428" stroke="#a07a10" stroke-width="1"/><circle cx="14.500" cy="6" r="1.300" fill="#fff8d0" stroke="#a07a10" stroke-width=".6"/><path d="M6 10l5 3M8 8l5 3" stroke="#c89a18" stroke-width=".9"/></svg>
  </div>
  <div id="taskbar">
    <div class="abs" style="left:0;top:0;width:960px;height:37px;background:linear-gradient(rgba(255,255,255,.16),rgba(255,255,255,.04) 45%,rgba(0,0,0,.03) 55%,rgba(0,0,0,.08))"></div><div class="abs" style="left:0;top:0;width:960px;height:1px;background:rgba(200,225,245,.75)"></div>
    <div class="tb" style="left:172px"></div><div class="tb" style="left:230px;background:linear-gradient(rgba(235,245,253,.9),rgba(190,222,246,.85) 50%,rgba(165,208,240,.85) 51%,rgba(200,230,250,.9))"></div><div class="tb" style="left:288px"></div>
    <svg class="ic" style="left:0;top:0" width="960" height="37" viewBox="160 683 960 37">
      <defs>
        <radialGradient id="orb" cx="50%" cy="35%" r="65%"><stop offset="0" stop-color="#7ec8f4"/><stop offset=".55" stop-color="#2a78c8"/><stop offset="1" stop-color="#123a78"/></radialGradient>
        <linearGradient id="streak" x1="0" y1="0" x2="1" y2="0"><stop offset="0" stop-color="#8cc4ec" stop-opacity="0"/><stop offset=".5" stop-color="#9cd0f4" stop-opacity=".75"/><stop offset="1" stop-color="#8cc4ec" stop-opacity="0"/></linearGradient>
      </defs>
      <path d="M862 683 C895 690 912 704 918 720 L934 720 C926 700 905 688 880 683Z" fill="url(#streak)"/>
      <!-- start orb -->
      <circle cx="185" cy="702" r="17.500" fill="url(#orb)" stroke="#0e2c5a" stroke-width="1"/><circle cx="185" cy="702" r="16" fill="none" stroke="#a8d8f8" stroke-opacity=".6" stroke-width="1.200"/>
      <path d="M176 696.500q4-2 8-.500l-1.200 6q-4-1.500-8 .500z" fill="#e8482a"/><path d="M185.500 696.500q4 1.500 8.500-.500l-1.200 6.500q-4.500 2-8.500.500z" fill="#7ac030"/><path d="M174.500 703.500q4-2 8-.500l-1.200 6q-4-1.500-8 .500z" fill="#2a9ae8"/><path d="M184 704q4 1.500 8.500-.500l-1.200 6.500q-4.500 2-8.500.500z" fill="#f8c828"/>
      <!-- IE -->
      <circle cx="245" cy="703" r="10.500" fill="#2a8ae0" stroke="#1458a8" stroke-width="1"/><text x="238.500" y="710" font-size="21" font-weight="bold" font-style="italic" fill="#e8f4ff" font-family="Liberation Sans, sans-serif">e</text><path d="M232 712c-4-6 6-18 22-21-12 5-20 14-18 19z" fill="#f4c838"/><path d="M256 693c3-3 1-5-3-3" stroke="#f4c838" stroke-width="2" fill="none"/>
      <!-- media player -->
      <rect x="289.500" y="691.500" width="19" height="21" rx="2" fill="#dfe8f4" stroke="#8aa8c8"/><rect x="286.500" y="694.500" width="16" height="16" rx="2" fill="#f08a20" stroke="#c86810"/><circle cx="294.500" cy="702.500" r="5.500" fill="#fff"/><path d="M292.500 699.500v6l5-3z" fill="#f08a20"/>
      <!-- coc coc -->
      <circle cx="360" cy="702" r="14" fill="#58b848" stroke="#2e8a2a" stroke-width="1"/><circle cx="358.500" cy="704" r="6.500" fill="none" stroke="#fff" stroke-width="3.500"/><path d="M364 697l5-7M366 700l7-4M361 695l2-7" stroke="#fff" stroke-width="2.200"/><path d="M366 692l6-2-2 6z" fill="#f08a20"/>
      <!-- SW -->
      <path d="M401 693l13-6 18 4v19l-6 7-25-7z" fill="#c8201a"/><path d="M401 693l13-6 18 4-6 5z" fill="#e8584a"/><path d="M426 696l6-5v19l-6 7z" fill="#98140e"/><text x="402" y="711" font-size="14.500" font-weight="bold" fill="#fff" font-family="Liberation Sans, sans-serif" textLength="24" lengthAdjust="spacingAndGlyphs" transform="rotate(8 414 706)">SW</text>
      <!-- explorer -->
      <path d="M462 693h9l2 2.500h16v19h-27z" fill="#f0d878" stroke="#c8a838" stroke-width="1"/><path d="M464 699h26v15.500h-26z" fill="#f8e8a0"/><rect x="466" y="703" width="21" height="9" fill="#7ab8e8" stroke="#e8f4fc" stroke-width="1.500"/><rect x="469" y="708" width="15" height="7" fill="#a8d4f0" stroke="#e8f4fc"/><rect x="470" y="690.500" width="5" height="3" fill="#48a848"/><rect x="476" y="690.500" width="4" height="3" fill="#e85838"/>
      <!-- tray -->
      <text x="945.500" y="703" font-size="11.500" fill="#fff" font-family="Liberation Sans, sans-serif">EN</text>
      <path d="M975.500 704.500h8l-4-4.500z" fill="#fff"/>
      <path d="M996 699h3l4-4v13l-4-4h-3z" fill="#fff" stroke="#c8d8e8" stroke-width=".5"/><path d="M1005.500 698.500q2.500 3 0 6M1008 696.500q4 5 0 10" stroke="#fff" stroke-width="1.100" fill="none"/>
      <rect x="1021.500" y="697.500" width="10" height="8" fill="#3a6ea8" stroke="#fff" stroke-width="1.300"/><path d="M1023 709.500h8M1026.500 706v3" stroke="#fff" stroke-width="1.300"/><rect x="1018.500" y="694.500" width="4" height="5" fill="#e8eef4" stroke="#fff" stroke-width=".6"/>
      <text x="1072.500" y="698.500" font-size="11.500" fill="#fff" text-anchor="middle" font-family="Liberation Sans, sans-serif">11:26 AM</text>
      <text x="1072.500" y="714.500" font-size="11.500" fill="#fff" text-anchor="middle" font-family="Liberation Sans, sans-serif">4/2/2016</text>
      <rect x="1108.500" y="684" width="11" height="36" fill="#5a8ab8" fill-opacity=".55" stroke="#9ac0e0" stroke-opacity=".7"/>
    </svg>
    
  </div>
</div>
</body>
</html>
